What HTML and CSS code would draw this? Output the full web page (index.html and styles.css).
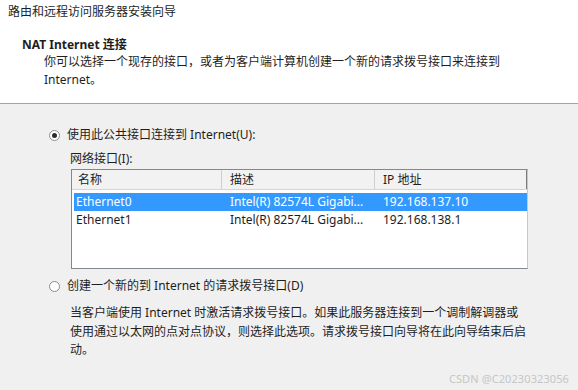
FILE: index.html
```html
<!DOCTYPE html>
<html lang="zh-CN">
<head>
    <meta charset="UTF-8">
    <title>路由和远程访问服务器安装向导</title>
    <link rel="stylesheet" href="styles.css">
</head>
<body>
    <div class="wizard">
        <div class="header">
            <div class="window-title">路由和远程访问服务器安装向导</div>
            <h2 class="page-title">NAT Internet 连接</h2>
            <p class="page-desc">你可以选择一个现存的接口，或者为客户端计算机创建一个新的请求拨号接口来连接到 Internet。</p>
        </div>

        <div class="content">
            <div class="option">
                <span class="radio checked"></span>
                <span>使用此公共接口连接到 Internet(U):</span>
            </div>
            <div class="field-label">网络接口(I):</div>
            <div class="listview">
                <div class="list-head">
                    <div class="col">名称</div>
                    <div class="col">描述</div>
                    <div class="col">IP 地址</div>
                </div>
                <div class="list-body">
                    <div class="list-row selected">
                        <div class="cell">Ethernet0</div>
                        <div class="cell">Intel(R) 82574L Gigabi...</div>
                        <div class="cell">192.168.137.10</div>
                    </div>
                    <div class="list-row">
                        <div class="cell">Ethernet1</div>
                        <div class="cell">Intel(R) 82574L Gigabi...</div>
                        <div class="cell">192.168.138.1</div>
                    </div>
                </div>
            </div>

            <div class="option second">
                <span class="radio"></span>
                <span>创建一个新的到 Internet 的请求拨号接口(D)</span>
            </div>
            <p class="option-desc">当客户端使用 Internet 时激活请求拨号接口。如果此服务器连接到一个调制解调器或使用通过以太网的点对点协议，则选择此选项。请求拨号接口向导将在此向导结束后启动。</p>
        </div>

        <div class="watermark">CSDN @C20230323056</div>
    </div>
</body>
</html>
```

FILE: styles.css
```css
body {
    margin: 0;
    background: #f0f0f0;
    font-family: "Noto Sans", "Noto Sans CJK SC", sans-serif;
    font-size: 12px;
    color: #1e1e1e;
}
.wizard {
    position: relative;
    width: 578px;
    height: 390px;
    overflow: hidden;
}
.header {
    background: #fff;
    height: 104px;
    border-bottom: 1px solid #a3a3a3;
    box-sizing: border-box;
    padding-top: 3px;
}
.window-title {
    line-height: 18px;
    padding-left: 8px;
}
.page-title {
    margin: 16px 0 0 22px;
    font-size: 12px;
    font-weight: bold;
    line-height: 16px;
}
.page-desc {
    margin: 0;
    padding-left: 44px;
    width: 470px;
    line-height: 18px;
}
.content {
    padding: 22px 0 0 49px;
}
.option {
    display: flex;
    align-items: center;
    gap: 7px;
    line-height: 18px;
}
.option.second {
    margin-top: 8px;
}
.radio {
    width: 9px;
    height: 9px;
    border: 1px solid #8c8c8c;
    border-radius: 50%;
    background: #fff;
    display: flex;
    align-items: center;
    justify-content: center;
}
.radio.checked::after {
    content: "";
    width: 5px;
    height: 5px;
    border-radius: 50%;
    background: #2b2b2b;
}
.field-label {
    margin: 6px 0 1px 21px;
    line-height: 18px;
}
.listview {
    margin-left: 22px;
    width: 457px;
    height: 100px;
    border: 1px solid #828790;
    border-right-color: #c8c8c8;
    background: #fff;
    box-sizing: border-box;
}
.list-head {
    display: grid;
    grid-template-columns: 150px 153px 1fr;
    height: 20px;
    background: #f2f2f2;
    border-bottom: 1px solid #d5d5d5;
    box-sizing: border-box;
}
.list-head .col {
    padding-left: 8px;
    line-height: 19px;
    border-right: 1px solid #cfcfcf;
}
.list-head .col:first-child {
    padding-left: 6px;
}
.list-head .col:last-child {
    border-right: 1px solid #7a7a7a;
}
.list-body {
    padding: 3px 0 0 2px;
}
.list-row {
    display: grid;
    grid-template-columns: 148px 153px 1fr;
    height: 18px;
    line-height: 18px;
}
.list-row .cell {
    padding-left: 8px;
    white-space: nowrap;
    overflow: hidden;
}
.list-row .cell:first-child {
    padding-left: 2px;
}
.list-row.selected {
    background: #3399ff;
    color: #fff;
}
.option-desc {
    margin: 9px 0 0 21px;
    width: 458px;
    line-height: 18.5px;
}
.watermark {
    position: absolute;
    right: 9px;
    bottom: 4px;
    color: #c6c6c6;
    font-size: 11px;
    letter-spacing: 0.1px;
}
```
